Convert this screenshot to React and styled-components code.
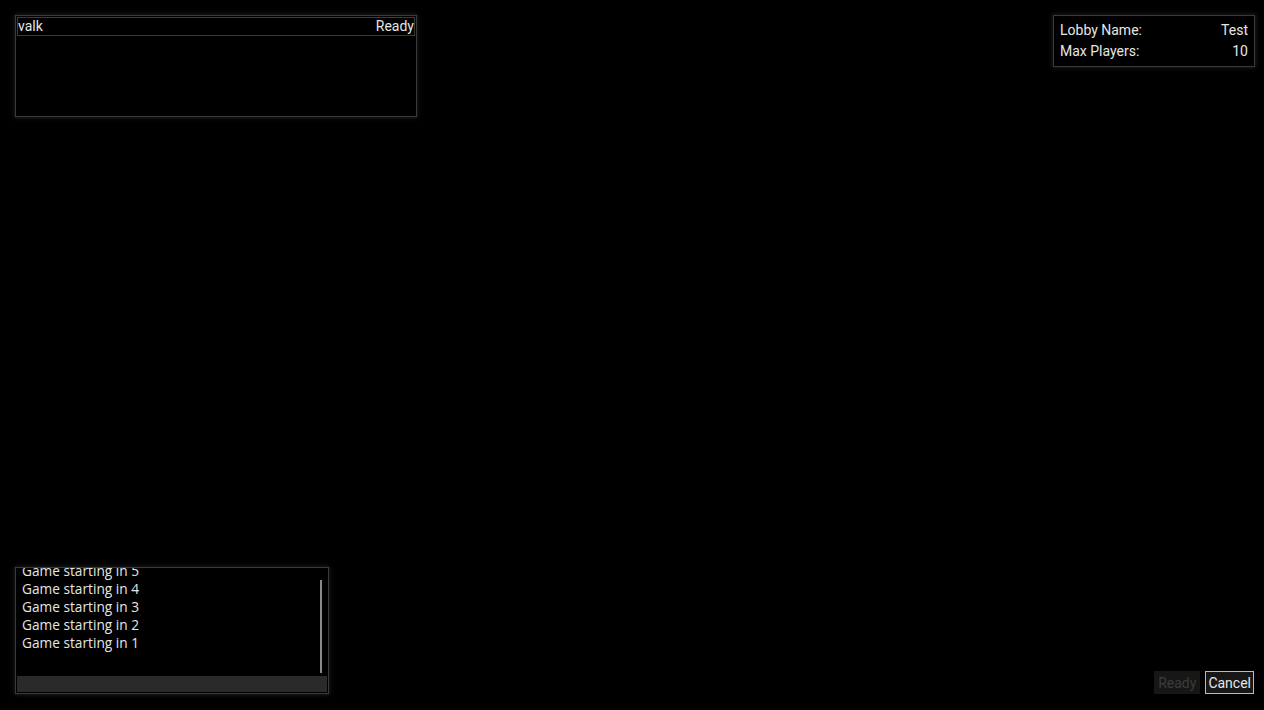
import React from "react";
import styled, { createGlobalStyle } from "styled-components";

const Global = createGlobalStyle`
  html, body { margin: 0; padding: 0; background: #000; }
  body { font-family: Roboto, "Liberation Sans", sans-serif; color: #e6e6e6; }
  * { box-sizing: border-box; }
`;

const Screen = styled.div`
  width: 1264px;
  height: 710px;
  padding: 15px 9px 16px 15px;
  display: flex;
  flex-direction: column;
  justify-content: space-between;
`;

const Row = styled.div`
  display: flex;
  justify-content: space-between;
  align-items: ${(p) => p.$align || "flex-start"};
`;

const Panel = styled.div`
  border: 1px solid #3a3a3a;
  box-shadow: 0 0 4px 1px #1c1c1c;
  background: #000;
`;

const PlayerPanel = styled(Panel)`
  width: 402px;
  height: 102px;
  padding: 1px;
`;

const PlayerRow = styled.div`
  display: flex;
  justify-content: space-between;
  align-items: center;
  height: 19px;
  border: 1px solid #3a3a3a;
  font-size: 14px;
  line-height: 17px;
`;

const LobbyPanel = styled(Panel)`
  width: 202px;
  height: 52px;
  padding: 4px 6px;
`;

const InfoRow = styled.div`
  display: flex;
  justify-content: space-between;
  font-size: 14px;
  line-height: 21px;
`;

const ChatPanel = styled(Panel)`
  position: relative;
  width: 314px;
  height: 127px;
  padding: 0 1px 1px 1px;
  display: flex;
  flex-direction: column;
`;

const Messages = styled.div`
  flex: 1;
  overflow: hidden;
  display: flex;
  flex-direction: column;
  justify-content: flex-end;
  padding: 0 0 24px 5px;
  font-family: "Open Sans", "Noto Sans", sans-serif;
  font-size: 13.7px;
  line-height: 18px;
  color: #e6e6e6;
`;

const Message = styled.div`
  white-space: nowrap;
  height: 18px;
  flex-shrink: 0;
`;

const ScrollThumb = styled.div`
  position: absolute;
  left: 304px;
  top: 12px;
  width: 2px;
  height: 93px;
  background: #8a8a8a;
`;

const ChatInput = styled.div`
  height: 16px;
  background: #2a2a2a;
`;

const Buttons = styled.div`
  display: flex;
  gap: 5px;
  align-items: flex-end;
  margin-right: 1px;
`;

const Button = styled.div`
  height: 23px;
  padding: 0 ${(p) => (p.$primary ? "2px" : "3px")};
  display: flex;
  align-items: center;
  font-size: 14px;
  background: #171717;
  color: ${(p) => (p.$disabled ? "#3c3c3c" : "#e6e6e6")};
  border: 1px solid ${(p) => (p.$primary ? "#e49cf0" : "#171717")};
`;

const messages = [5, 4, 3, 2, 1].map((n) => `Game starting in ${n}`);

export default function App() {
  return (
    <>
      <Global />
      <Screen>
        <Row>
          <PlayerPanel>
            <PlayerRow>
              <span>valk</span>
              <span>Ready</span>
            </PlayerRow>
          </PlayerPanel>
          <LobbyPanel>
            <InfoRow>
              <span>Lobby Name:</span>
              <span>Test</span>
            </InfoRow>
            <InfoRow>
              <span>Max Players:</span>
              <span>10</span>
            </InfoRow>
          </LobbyPanel>
        </Row>
        <Row $align="flex-end">
          <ChatPanel>
            <Messages>
              {messages.map((m) => (
                <Message key={m}>{m}</Message>
              ))}
            </Messages>
            <ScrollThumb />
            <ChatInput />
          </ChatPanel>
          <Buttons>
            <Button $disabled>Ready</Button>
            <Button $primary>Cancel</Button>
          </Buttons>
        </Row>
      </Screen>
    </>
  );
}
